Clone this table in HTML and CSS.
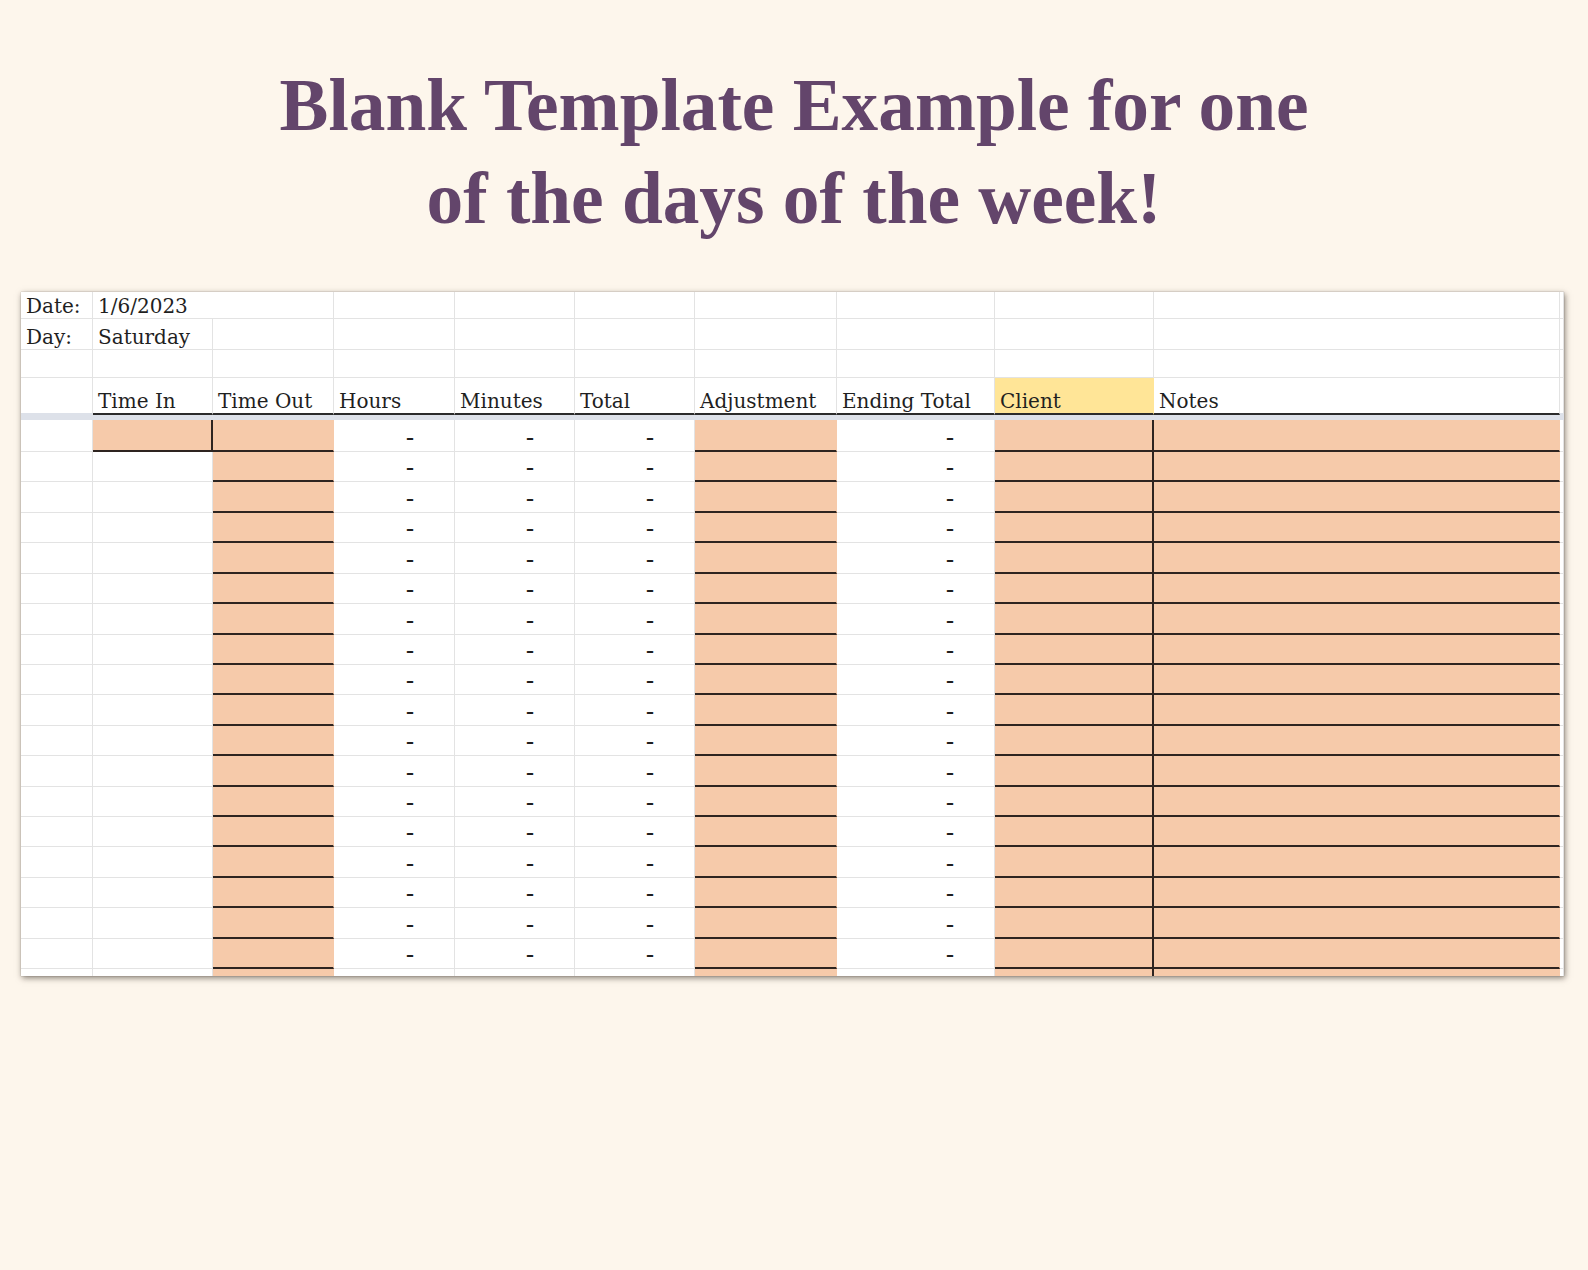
FILE: index.html
```html
<!DOCTYPE html>
<html lang="en">
<head>
<meta charset="utf-8">
<title>Blank Template Example</title>
<link rel="stylesheet" href="styles.css">
</head>
<body>
<h1 class="title">Blank Template Example for one<br>of the days of the week!</h1>
<div class="sheet">
  <!-- row 1 -->
  <div class="c t">Date:</div><div class="c t span2">1/6/2023</div><div class="c"></div><div class="c"></div><div class="c"></div><div class="c"></div><div class="c"></div><div class="c"></div><div class="c"></div><div class="c"></div>
  <!-- row 2 -->
  <div class="c t">Day:</div><div class="c t">Saturday</div><div class="c"></div><div class="c"></div><div class="c"></div><div class="c"></div><div class="c"></div><div class="c"></div><div class="c"></div><div class="c"></div><div class="c"></div>
  <!-- row 3 -->
  <div class="c"></div><div class="c"></div><div class="c"></div><div class="c"></div><div class="c"></div><div class="c"></div><div class="c"></div><div class="c"></div><div class="c"></div><div class="c"></div><div class="c"></div>
  <!-- header -->
  <div class="c hd0"></div><div class="c t hd">Time In</div><div class="c t hd">Time Out</div><div class="c t hd">Hours</div><div class="c t hd">Minutes</div><div class="c t hd">Total</div><div class="c t hd">Adjustment</div><div class="c t hd">Ending Total</div><div class="c t hd yl">Client</div><div class="c t hd">Notes</div><div class="c hd0"></div>
  <div class="band"></div>
  <!-- data rows -->
  <div class="c"></div><div class="c pk vr"></div><div class="c pk"></div><div class="c n">–</div><div class="c n">–</div><div class="c n">–</div><div class="c pk"></div><div class="c n">–</div><div class="c pk vr"></div><div class="c pk"></div><div class="c"></div>
  <div class="c"></div><div class="c"></div><div class="c pk"></div><div class="c n">–</div><div class="c n">–</div><div class="c n">–</div><div class="c pk"></div><div class="c n">–</div><div class="c pk vr"></div><div class="c pk"></div><div class="c"></div>
  <div class="c"></div><div class="c"></div><div class="c pk"></div><div class="c n">–</div><div class="c n">–</div><div class="c n">–</div><div class="c pk"></div><div class="c n">–</div><div class="c pk vr"></div><div class="c pk"></div><div class="c"></div>
  <div class="c"></div><div class="c"></div><div class="c pk"></div><div class="c n">–</div><div class="c n">–</div><div class="c n">–</div><div class="c pk"></div><div class="c n">–</div><div class="c pk vr"></div><div class="c pk"></div><div class="c"></div>
  <div class="c"></div><div class="c"></div><div class="c pk"></div><div class="c n">–</div><div class="c n">–</div><div class="c n">–</div><div class="c pk"></div><div class="c n">–</div><div class="c pk vr"></div><div class="c pk"></div><div class="c"></div>
  <div class="c"></div><div class="c"></div><div class="c pk"></div><div class="c n">–</div><div class="c n">–</div><div class="c n">–</div><div class="c pk"></div><div class="c n">–</div><div class="c pk vr"></div><div class="c pk"></div><div class="c"></div>
  <div class="c"></div><div class="c"></div><div class="c pk"></div><div class="c n">–</div><div class="c n">–</div><div class="c n">–</div><div class="c pk"></div><div class="c n">–</div><div class="c pk vr"></div><div class="c pk"></div><div class="c"></div>
  <div class="c"></div><div class="c"></div><div class="c pk"></div><div class="c n">–</div><div class="c n">–</div><div class="c n">–</div><div class="c pk"></div><div class="c n">–</div><div class="c pk vr"></div><div class="c pk"></div><div class="c"></div>
  <div class="c"></div><div class="c"></div><div class="c pk"></div><div class="c n">–</div><div class="c n">–</div><div class="c n">–</div><div class="c pk"></div><div class="c n">–</div><div class="c pk vr"></div><div class="c pk"></div><div class="c"></div>
  <div class="c"></div><div class="c"></div><div class="c pk"></div><div class="c n">–</div><div class="c n">–</div><div class="c n">–</div><div class="c pk"></div><div class="c n">–</div><div class="c pk vr"></div><div class="c pk"></div><div class="c"></div>
  <div class="c"></div><div class="c"></div><div class="c pk"></div><div class="c n">–</div><div class="c n">–</div><div class="c n">–</div><div class="c pk"></div><div class="c n">–</div><div class="c pk vr"></div><div class="c pk"></div><div class="c"></div>
  <div class="c"></div><div class="c"></div><div class="c pk"></div><div class="c n">–</div><div class="c n">–</div><div class="c n">–</div><div class="c pk"></div><div class="c n">–</div><div class="c pk vr"></div><div class="c pk"></div><div class="c"></div>
  <div class="c"></div><div class="c"></div><div class="c pk"></div><div class="c n">–</div><div class="c n">–</div><div class="c n">–</div><div class="c pk"></div><div class="c n">–</div><div class="c pk vr"></div><div class="c pk"></div><div class="c"></div>
  <div class="c"></div><div class="c"></div><div class="c pk"></div><div class="c n">–</div><div class="c n">–</div><div class="c n">–</div><div class="c pk"></div><div class="c n">–</div><div class="c pk vr"></div><div class="c pk"></div><div class="c"></div>
  <div class="c"></div><div class="c"></div><div class="c pk"></div><div class="c n">–</div><div class="c n">–</div><div class="c n">–</div><div class="c pk"></div><div class="c n">–</div><div class="c pk vr"></div><div class="c pk"></div><div class="c"></div>
  <div class="c"></div><div class="c"></div><div class="c pk"></div><div class="c n">–</div><div class="c n">–</div><div class="c n">–</div><div class="c pk"></div><div class="c n">–</div><div class="c pk vr"></div><div class="c pk"></div><div class="c"></div>
  <div class="c"></div><div class="c"></div><div class="c pk"></div><div class="c n">–</div><div class="c n">–</div><div class="c n">–</div><div class="c pk"></div><div class="c n">–</div><div class="c pk vr"></div><div class="c pk"></div><div class="c"></div>
  <div class="c"></div><div class="c"></div><div class="c pk"></div><div class="c n">–</div><div class="c n">–</div><div class="c n">–</div><div class="c pk"></div><div class="c n">–</div><div class="c pk vr"></div><div class="c pk"></div><div class="c"></div>
  <div class="c"></div><div class="c"></div><div class="c pk"></div><div class="c n"></div><div class="c n"></div><div class="c n"></div><div class="c pk"></div><div class="c n"></div><div class="c pk vr"></div><div class="c pk"></div><div class="c"></div>
</div>
</body>
</html>
```
FILE: styles.css
```css
html, body {
  margin: 0;
  padding: 0;
  background: #fdf6ec;
}
body {
  width: 1588px;
  height: 1270px;
  overflow: hidden;
}
.title {
  margin: 59px 0 0;
  font-family: "Liberation Serif", "Times New Roman", serif;
  font-weight: bold;
  font-size: 73.3px;
  line-height: 93px;
  color: #63456b;
  text-align: center;
}
.sheet {
  margin: 47px 0 0 21px;
  width: 1543px;
  height: 684px;
  overflow: hidden;
  background: #fff;
  box-shadow: 1px 2px 6px rgba(40, 30, 20, 0.55), 0 0 1px rgba(0, 0, 0, 0.35);
  display: grid;
  grid-template-columns: 72px 120px 121px 121px 120px 120px 142px 158px 159px 406px 4px;
  grid-template-rows: 27px 31px 28px 37px 5px 32px repeat(17, 30.43px) 30px;
  font-family: "DejaVu Serif", serif;
  font-size: 20px;
  color: #1f1f1f;
}
.c {
  box-sizing: border-box;
  border-right: 1px solid #e3e3e3;
  border-bottom: 1px solid #e3e3e3;
  display: flex;
  align-items: flex-end;
  line-height: 20px;
  white-space: nowrap;
  overflow: hidden;
}
.t {
  padding: 0 0 2px 5px;
}
.span2 {
  grid-column: span 2;
}
.hd {
  border-bottom: 2px solid #2b2b2b;
  padding-bottom: 2px;
}
.hd0 {
  border-bottom: 2px solid #dde1e9;
}
.yl {
  background: #ffe597;
  border-right-color: #ffe597;
}
.band {
  grid-column: 1 / -1;
  background: #dde1e9;
}
.pk {
  background: #f6caaa;
  border-right-color: #f6caaa;
  border-bottom: 2px solid #2e2420;
}
.vr {
  border-right: 2px solid #2e2420;
}
.n {
  justify-content: flex-end;
  padding: 0 40px 2px 0;
  font-size: 16px;
  font-weight: bold;
}
```
